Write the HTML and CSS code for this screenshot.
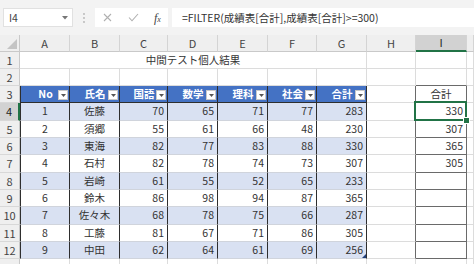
FILE: index.html
```html
<!DOCTYPE html>
<html lang="ja">
<head>
<meta charset="utf-8">
<title>中間テスト個人結果</title>
<link rel="stylesheet" href="styles.css">
</head>
<body>
<div class="toolbar">
  <div class="namebox"><span>I4</span><svg class="nb-arrow" width="6" height="4" viewBox="0 0 6 4"><path d="M0 0H6L3 3.5Z" fill="#777"/></svg></div>
  <div class="sep"><svg width="2" height="10" viewBox="0 0 2 10"><circle cx="1" cy="1" r="0.9" fill="#b5b5b5"/><circle cx="1" cy="5" r="0.9" fill="#b5b5b5"/><circle cx="1" cy="9" r="0.9" fill="#b5b5b5"/></svg></div>
  <div class="fxbox">
    <svg class="ic-x" width="9" height="9" viewBox="0 0 9 9"><path d="M1 1L8 8M8 1L1 8" stroke="#b0b0b0" stroke-width="1.1" fill="none"/></svg>
    <svg class="ic-ok" width="11" height="9" viewBox="0 0 11 9"><path d="M1 4.5L4 7.8L10 1" stroke="#b0b0b0" stroke-width="1.1" fill="none"/></svg>
    <span class="fx">f<small>x</small></span>
  </div>
  <div class="formula">=FILTER(成績表[合計],成績表[合計]&gt;=300)</div>
</div>

<div class="sheet">
  <!-- column headers -->
  <div class="c corner"><svg width="10" height="10" viewBox="0 0 10 10"><path d="M10 0V10H0Z" fill="#c4c4c4"/></svg></div>
  <div class="c ch">A</div><div class="c ch">B</div><div class="c ch">C</div><div class="c ch">D</div><div class="c ch">E</div><div class="c ch">F</div><div class="c ch">G</div><div class="c ch">H</div><div class="c ch chsel">I</div><div class="c ch"></div>

  <!-- row 1 -->
  <div class="c rh">1</div><div class="c title">中間テスト個人結果</div><div class="c"></div><div class="c"></div><div class="c"></div>

  <!-- row 2 -->
  <div class="c rh">2</div><div class="c"></div><div class="c"></div><div class="c"></div><div class="c"></div><div class="c"></div><div class="c"></div><div class="c"></div><div class="c"></div><div class="c ib-top"></div><div class="c"></div>

  <!-- row 3 -->
  <div class="c rh">3</div>
  <div class="c t th tfirst"><span class="lbl">No</span><span class="dd"><svg width="5" height="3" viewBox="0 0 5 3"><path d="M0 0H5L2.5 3Z" fill="#555"/></svg></span></div>
  <div class="c t th"><span class="lbl">氏名</span><span class="dd"><svg width="5" height="3" viewBox="0 0 5 3"><path d="M0 0H5L2.5 3Z" fill="#555"/></svg></span></div>
  <div class="c t th"><span class="lbl">国語</span><span class="dd"><svg width="5" height="3" viewBox="0 0 5 3"><path d="M0 0H5L2.5 3Z" fill="#555"/></svg></span></div>
  <div class="c t th"><span class="lbl">数学</span><span class="dd"><svg width="5" height="3" viewBox="0 0 5 3"><path d="M0 0H5L2.5 3Z" fill="#555"/></svg></span></div>
  <div class="c t th"><span class="lbl">理科</span><span class="dd"><svg width="5" height="3" viewBox="0 0 5 3"><path d="M0 0H5L2.5 3Z" fill="#555"/></svg></span></div>
  <div class="c t th"><span class="lbl">社会</span><span class="dd"><svg width="5" height="3" viewBox="0 0 5 3"><path d="M0 0H5L2.5 3Z" fill="#555"/></svg></span></div>
  <div class="c t th"><span class="lbl">合計</span><span class="dd"><svg width="5" height="3" viewBox="0 0 5 3"><path d="M0 0H5L2.5 3Z" fill="#555"/></svg></span></div>
  <div class="c hb"></div><div class="c ib ctr">合計</div><div class="c"></div>

  <!-- row 4 -->
  <div class="c rh rhsel">4</div>
  <div class="c t bl tfirst ctr">1</div><div class="c t bl ctr">佐藤</div><div class="c t bl num">70</div><div class="c t bl num">65</div><div class="c t bl num">71</div><div class="c t bl num">77</div><div class="c t bl num">283</div>
  <div class="c hb"></div><div class="c ib num cur">330</div><div class="c"></div>

  <!-- row 5 -->
  <div class="c rh">5</div>
  <div class="c t tfirst ctr">2</div><div class="c t ctr">須郷</div><div class="c t num">55</div><div class="c t num">61</div><div class="c t num">66</div><div class="c t num">48</div><div class="c t num">230</div>
  <div class="c hb"></div><div class="c ib num">307</div><div class="c"></div>

  <!-- row 6 -->
  <div class="c rh">6</div>
  <div class="c t bl tfirst ctr">3</div><div class="c t bl ctr">東海</div><div class="c t bl num">82</div><div class="c t bl num">77</div><div class="c t bl num">83</div><div class="c t bl num">88</div><div class="c t bl num">330</div>
  <div class="c hb"></div><div class="c ib num">365</div><div class="c"></div>

  <!-- row 7 -->
  <div class="c rh">7</div>
  <div class="c t tfirst ctr">4</div><div class="c t ctr">石村</div><div class="c t num">82</div><div class="c t num">78</div><div class="c t num">74</div><div class="c t num">73</div><div class="c t num">307</div>
  <div class="c hb"></div><div class="c ib num">305</div><div class="c"></div>

  <!-- row 8 -->
  <div class="c rh">8</div>
  <div class="c t bl tfirst ctr">5</div><div class="c t bl ctr">岩崎</div><div class="c t bl num">61</div><div class="c t bl num">55</div><div class="c t bl num">52</div><div class="c t bl num">65</div><div class="c t bl num">233</div>
  <div class="c hb"></div><div class="c ib"></div><div class="c"></div>

  <!-- row 9 -->
  <div class="c rh">9</div>
  <div class="c t tfirst ctr">6</div><div class="c t ctr">鈴木</div><div class="c t num">86</div><div class="c t num">98</div><div class="c t num">94</div><div class="c t num">87</div><div class="c t num">365</div>
  <div class="c hb"></div><div class="c ib"></div><div class="c"></div>

  <!-- row 10 -->
  <div class="c rh">10</div>
  <div class="c t bl tfirst ctr">7</div><div class="c t bl ctr">佐々木</div><div class="c t bl num">68</div><div class="c t bl num">78</div><div class="c t bl num">75</div><div class="c t bl num">66</div><div class="c t bl num">287</div>
  <div class="c hb"></div><div class="c ib"></div><div class="c"></div>

  <!-- row 11 -->
  <div class="c rh">11</div>
  <div class="c t tfirst ctr">8</div><div class="c t ctr">工藤</div><div class="c t num">81</div><div class="c t num">67</div><div class="c t num">71</div><div class="c t num">86</div><div class="c t num">305</div>
  <div class="c hb"></div><div class="c ib"></div><div class="c"></div>

  <!-- row 12 -->
  <div class="c rh">12</div>
  <div class="c t bl tfirst ctr">9</div><div class="c t bl ctr">中田</div><div class="c t bl num">62</div><div class="c t bl num">64</div><div class="c t bl num">61</div><div class="c t bl num">69</div><div class="c t bl num tend">256</div>
  <div class="c hb"></div><div class="c ib"></div><div class="c"></div>

  <!-- row 13 (only its top edge is in view) -->
  <div class="c rh"></div><div class="c"></div><div class="c"></div><div class="c"></div><div class="c"></div><div class="c"></div><div class="c"></div><div class="c"></div><div class="c"></div><div class="c"></div><div class="c"></div>
</div>
</body>
</html>
```

FILE: styles.css
```css
* { box-sizing: border-box; }

html, body {
  margin: 0;
  padding: 0;
}

body {
  width: 474px;
  height: 264px;
  overflow: hidden;
  background: #ffffff;
  font-family: "Noto Sans CJK JP", "Noto Sans", sans-serif;
  color: #333;
}

/* ---------- formula bar ---------- */
.toolbar {
  height: 35px;
  background: #f3f3f3;
  display: flex;
  align-items: flex-start;
  padding-top: 8px;
  padding-left: 3px;
}

.namebox {
  width: 70px;
  height: 19px;
  background: #fff;
  border: 1px solid #e1e1e1;
  display: flex;
  align-items: center;
  justify-content: space-between;
  padding: 0 4px 0 5px;
  font-size: 10.5px;
  color: #444;
}

.sep {
  width: 22px;
  height: 19px;
  display: flex;
  align-items: center;
  justify-content: center;
}

.fxbox {
  width: 73px;
  height: 19px;
  background: #fff;
  display: flex;
  align-items: center;
  padding-left: 8px;
}

.ic-x { margin-right: 16px; }
.ic-ok { margin-right: 15px; }

.fx {
  font-family: "Liberation Serif", serif;
  font-style: italic;
  font-size: 12px;
  color: #444;
  line-height: 1;
}

.fx small {
  font-size: 8px;
}

.formula {
  flex: 1;
  height: 19px;
  margin-left: 4px;
  background: #fff;
  display: flex;
  align-items: center;
  padding-left: 10px;
  font-size: 10.5px;
  color: #333;
  white-space: nowrap;
}

/* ---------- sheet grid ---------- */
.sheet {
  display: grid;
  grid-template-columns: 20px 50px 50px 48px 50px 50px 49px 50px 49px 51px 1fr;
  grid-template-rows: 17px 17px 17px 17px 18px 17px 17px 18px 17px 17px 18px 17px 17px 17px;
  font-size: 10.5px;
}

.c {
  border-right: 1px solid #dcdcdc;
  border-bottom: 1px solid #dcdcdc;
  display: flex;
  align-items: center;
  padding: 0 2px;
  white-space: nowrap;
  line-height: 1;
}

.corner {
  background: #efefef;
  border-right-color: #c9c9c9;
  border-bottom-color: #c9c9c9;
  justify-content: flex-end;
  align-items: flex-end;
  padding: 0 2px 2px 0;
}

.ch {
  background: #efefef;
  border-right-color: #d4d4d4;
  border-bottom-color: #c9c9c9;
  justify-content: center;
  color: #444;
  font-size: 11px;
}

.chsel {
  background: #d2d2d2;
  border-bottom: 2px solid #217346;
  color: #222;
}

.rh {
  background: #efefef;
  border-right-color: #c9c9c9;
  border-bottom-color: #d8d8d8;
  justify-content: center;
  color: #444;
  font-size: 11px;
  padding: 0;
}

.rhsel {
  background: #d2d2d2;
  border-right: 2px solid #217346;
  color: #222;
}

.title {
  grid-column: span 7;
  justify-content: center;
  color: #333;
}

/* table */
.t {
  border-right: 1px solid #2e2e2e;
  border-bottom-color: #d0d4dc;
  color: #333;
}

.tfirst {
  border-left: 1px solid #2e2e2e;
}

.bl {
  background: #d9e1f2;
}

.th {
  background: #4472c4;
  color: #fff;
  font-weight: bold;
  display: grid;
  grid-template-columns: 1fr auto 1fr;
  align-items: center;
  padding: 0 1px 0 2px;
  border-bottom-color: #2e2e2e;
}

.th .lbl {
  grid-column: 2;
}

.th .dd {
  grid-column: 3;
  justify-self: end;
  align-self: end;
  margin-bottom: 2px;
  width: 10px;
  height: 10px;
  background: #fff;
  border: 1px solid #c8c8c8;
  display: flex;
  align-items: center;
  justify-content: center;
}

.ctr { justify-content: center; }
.num { justify-content: flex-end; padding-right: 3px; }

.tend { position: relative; }
.tend::after {
  content: "";
  position: absolute;
  right: 0;
  bottom: 0;
  width: 0;
  height: 0;
  border-left: 4px solid transparent;
  border-bottom: 4px solid #1f3f7a;
}

/* I column range */
.hb { border-right-color: #6a6a6a; }
.ib {
  border-right: 1px solid #6a6a6a;
  border-bottom: 1px solid #6a6a6a;
}
.ib-top { border-bottom-color: #6a6a6a; }

.cur { position: relative; }
.cur::after {
  content: "";
  position: absolute;
  left: -2px;
  top: -2px;
  right: -1px;
  bottom: -1px;
  border: 2px solid #217346;
}
.cur::before {
  content: "";
  position: absolute;
  right: -4px;
  bottom: -4px;
  width: 5px;
  height: 5px;
  background: #217346;
  border: 1px solid #fff;
  z-index: 2;
}
```
